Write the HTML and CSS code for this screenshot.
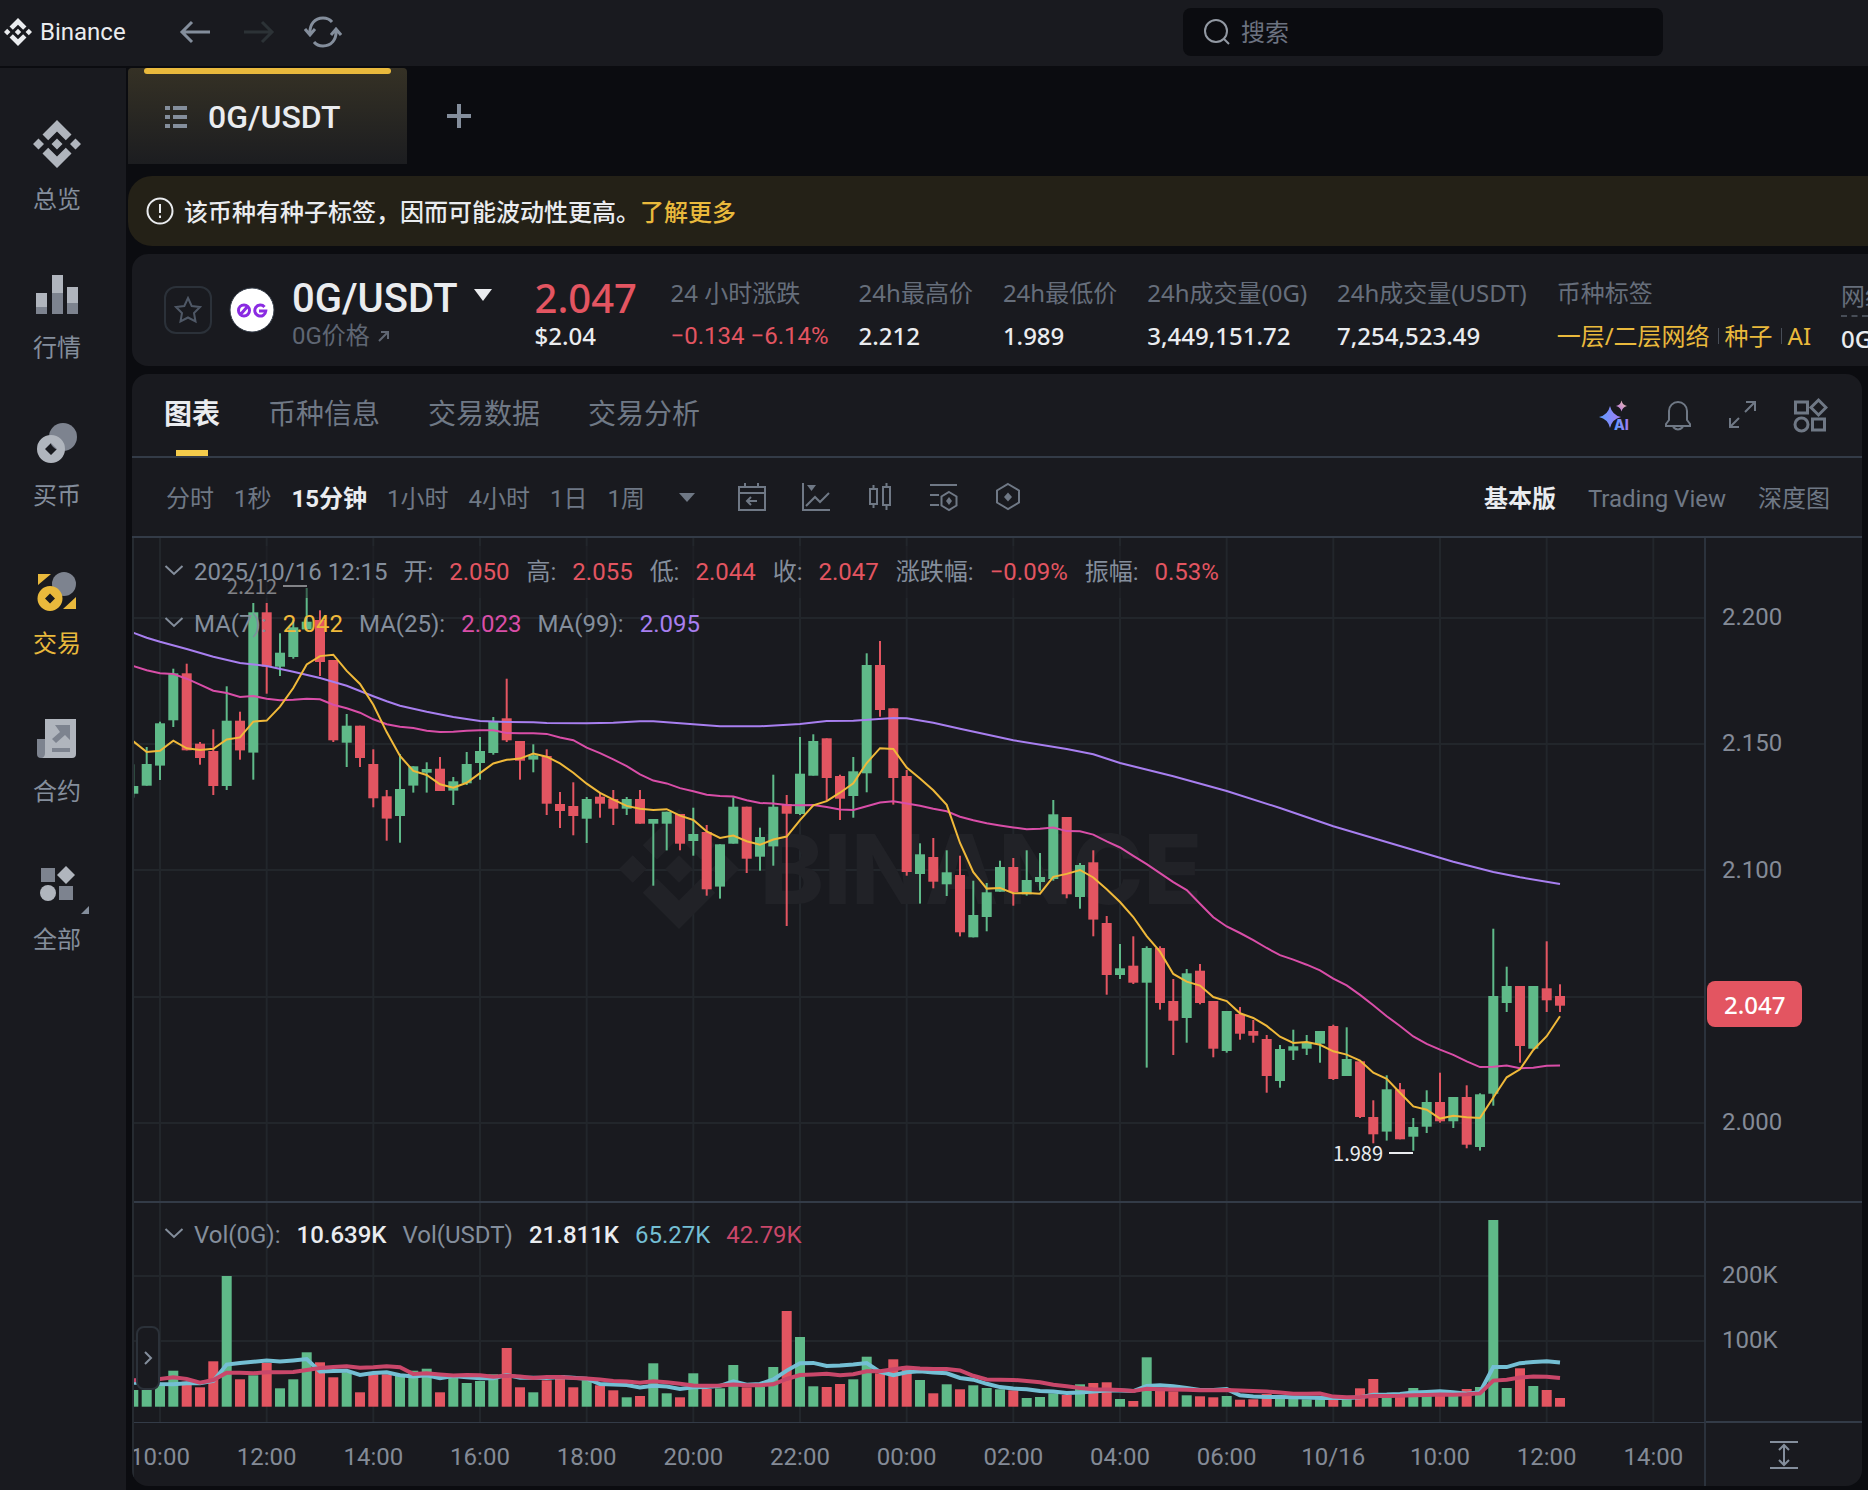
FILE: index.html
```html
<!DOCTYPE html>
<html lang="zh-CN">
<head>
<meta charset="utf-8">
<meta name="viewport" content="width=device-width, initial-scale=1">
<title>0G/USDT | Binance</title>
<link rel="stylesheet" href="styles.css">
</head>
<body>
<svg class="defs" aria-hidden="true">
  <symbol id="bnb" viewBox="0 0 48 48">
    <path d="M24 0 38.500 14.500 32.800 20.200 24 11.400 15.200 20.200 9.500 14.500zM5.500 18.500 11 24 5.500 29.500 0 24zM24 18.500 29.500 24 24 29.500 18.500 24zM42.500 18.500 48 24 42.500 29.500 37 24zM15.200 27.800 24 36.600 32.800 27.800 38.500 33.500 24 48 9.500 33.500z"/>
  </symbol>
  <symbol id="chevron" viewBox="0 0 20 12"><path d="M1.500 2 10 10 18.500 2" fill="none" stroke="currentColor" stroke-width="2"/></symbol>
</svg>

<header class="topbar">
  <a class="brand" href="#"><svg class="brand-logo"><use href="#bnb"/></svg>Binance</a>
  <nav class="history" aria-label="导航">
    <button class="icon-btn" aria-label="后退"><svg width="32" height="32" viewBox="0 0 32 32"><path d="M13 6 3 16l10 10M3 16h28"/></svg></button>
    <button class="icon-btn off" aria-label="前进"><svg width="32" height="32" viewBox="0 0 32 32"><path d="m19 6 10 10-10 10M29 16H1"/></svg></button>
    <button class="icon-btn wide" aria-label="刷新"><svg width="38" height="32" viewBox="0 0 38 32"><path d="M6 19C5 8 11 2 19 2c4 0 7 1.500 9 4M1 13l5 6 5-6M32 13c1 11-5 17-13 17-4 0-7-1.500-9-4M27 19l5-6 5 6"/></svg></button>
  </nav>
  <label class="search">
    <svg width="28" height="28" viewBox="0 0 28 28"><circle cx="13" cy="13" r="11"/><path d="m21 21 5 5"/></svg>
    <input type="search" placeholder="搜索" aria-label="搜索">
  </label>
</header>

<div class="shell">
  <nav class="sidebar" aria-label="主菜单">
    <a href="#"><svg class="c1" viewBox="0 0 48 48"><use href="#bnb"/></svg>总览</a>
    <a href="#"><svg viewBox="0 -3 48 48"><path class="c1" d="M3 22h11v14H3zM19 4h11v18H19zM34 16h11v16H34z"/><path class="c2" d="M3 36h11v7H3zM19 22h11v21H19zM34 32h11v11H34z"/></svg>行情</a>
    <a href="#"><svg viewBox="0 -6 48 48"><circle class="c2" cx="30" cy="15" r="14"/><path class="c1" fill-rule="evenodd" d="M18 13a14 14 0 1 0 0 28 14 14 0 0 0 0-28zm0 8 6 6-6 6-6-6z"/></svg>买币</a>
    <a class="active" href="#"><svg viewBox="0 -4 48 48"><circle class="c2" cx="31" cy="16" r="12"/><path class="cy" fill-rule="evenodd" d="M17 18a12.500 12.500 0 1 0 0 25 12.500 12.500 0 0 0 0-25zm0 7.500 5 5-5 5-5-5zM5 6h13L5 17zM43 29v12H30z"/></svg>交易</a>
    <a href="#"><svg viewBox="0 -4 48 48"><path class="c2" d="M4 23h9v19H8q-4 0-4-4z"/><path class="c1" d="M12 3h31v35q0 4-4 4H9q3-1 3-5z"/><path class="c2" d="M22 9h15v15l-5-5-9 8-4-4 8-7zM19 32h18v4H19z"/></svg>合约</a>
    <a class="more" href="#"><svg viewBox="0 0 48 48"><path class="c2" d="M8 8h14v14H8zM26 26h14v14H26z"/><path class="c1" d="m33 6 9 9-9 9-9-9z"/><circle class="c1" cx="15" cy="33" r="8"/></svg>全部<i class="corner"></i></a>
  </nav>

  <main class="content">
    <div class="pair-tabs">
      <button class="pair-tab"><svg width="22" height="24" viewBox="0 0 22 24"><path d="M0 3h5M8 3h14M0 12h5M8 12h14M0 21h5M8 21h14"/></svg>0G/USDT</button>
      <button class="add" aria-label="新标签"><svg width="24" height="24" viewBox="0 0 24 24"><path d="M12 0v24M0 12h24"/></svg></button>
    </div>

    <div class="notice">
      <svg width="28" height="28" viewBox="0 0 28 28"><circle cx="14" cy="14" r="12.500"/><path d="M14 7v9M14 18.500v2.500"/></svg>
      <p>该币种有种子标签，因而可能波动性更高。<a href="#">了解更多</a></p>
    </div>

    <section class="ticker">
      <button class="star" aria-label="收藏"><svg width="28" height="28" viewBox="0 0 28 28"><path d="m14 2 3.700 8 8.300 1-6 6 1.500 8.500L14 21.500 6.500 25.500 8 17l-6-6 8.300-1z"/></svg></button>
      <svg class="coin" width="46" height="46" viewBox="0 0 46 46"><circle cx="23" cy="23" r="22"/><path d="M15 18a5.500 5.500 0 1 0 0 11 5.500 5.500 0 0 0 0-11zM11.500 27.500l7-8M35.500 20a5.500 5.500 0 1 0 1.300 4H30"/></svg>
      <div class="pair">
        <h1><button>0G/USDT<i class="caret"></i></button></h1>
        <a href="#">0G价格<svg width="12" height="12" viewBox="0 0 12 12"><path d="M1 11 10 2M3 2h7v7"/></svg></a>
      </div>
      <div class="last"><strong>2.047</strong><span>$2.04</span></div>
      <dl class="stats">
        <div><dt>24 小时涨跌</dt><dd class="down">−0.134 −6.14%</dd></div>
        <div><dt>24h最高价</dt><dd>2.212</dd></div>
        <div><dt>24h最低价</dt><dd>1.989</dd></div>
        <div><dt>24h成交量(0G)</dt><dd>3,449,151.72</dd></div>
        <div><dt>24h成交量(USDT)</dt><dd>7,254,523.49</dd></div>
        <div><dt>币种标签</dt><dd class="tags"><a href="#">一层/二层网络</a><a href="#">种子</a><a href="#">AI</a></dd></div>
        <div class="network"><dt>网络</dt><dd>0G</dd></div>
      </dl>
    </section>

    <section class="card">
      <div class="card-head">
        <div class="tabs">
          <button class="on">图表</button><button>币种信息</button><button>交易数据</button><button>交易分析</button>
        </div>
        <div class="tools">
          <button aria-label="AI"><svg width="36" height="36" viewBox="0 0 36 36">
            <defs>
              <linearGradient id="ai" x1="0" y1="0" x2="1" y2="0"><stop offset="0" stop-color="#5c9dff"/><stop offset="1" stop-color="#a37bf5"/></linearGradient>
              <linearGradient id="spark" x1="0" y1="1" x2="1" y2="0"><stop offset="0" stop-color="#b06cf0"/><stop offset="1" stop-color="#f2c9a0"/></linearGradient>
            </defs>
            <path class="fill-ai" d="M16 9q2 9 11 11-9 2-11 11-2-9-11-11 9-2 11-11z"/><path class="fill-pk" d="M27.500 3.500q1 4.500 5.500 5.500-4.500 1-5.500 5.500-1-4.500-5.500-5.500 4.500-1 5.500-5.500z"/><text x="20" y="33">AI</text></svg></button>
          <button aria-label="提醒"><svg width="36" height="36" viewBox="0 0 36 36"><path d="M9 14a9 9 0 0 1 18 0v9l3 4v2H6v-2l3-4zM13 30q5 5 10 0"/></svg></button>
          <button aria-label="全屏"><svg width="36" height="36" viewBox="0 0 36 36"><path d="M19 15 29 5M20 5h9v9M13 21 4 30M4 21v9h9"/></svg></button>
          <button aria-label="布局"><svg width="36" height="36" viewBox="0 0 36 36"><path class="bold" d="M3.500 5h12v11h-12zM20.500 22h12v11h-12zM26.500 3l7.500 7.500-7.500 7.500-7.500-7.500z"/><circle class="bold" cx="9.500" cy="27.500" r="6.500"/></svg></button>
        </div>
      </div>

      <div class="toolbar">
        <div class="intervals">
          <button>分时</button><button>1秒</button><button class="on">15分钟</button><button>1小时</button><button>4小时</button><button>1日</button><button>1周</button>
        </div>
        <div class="indicators">
          <button class="expand" aria-label="更多周期"><i class="caret small"></i></button>
          <button aria-label="跳转日期"><svg width="32" height="32" viewBox="0 0 32 32"><path d="M3 6h26v23H3zM3 12h26M9 2v4M22 2v4M21 20H11M15 16l-4 4 4 4"/></svg></button>
          <button aria-label="指标"><svg width="32" height="32" viewBox="0 0 32 32"><path d="M3 2v27h27M6 25l9-9 5 5 9-9"/><path class="solid" d="M7 4h9l-4.500 6z"/></svg></button>
          <button aria-label="图表类型"><svg width="32" height="32" viewBox="0 0 32 32"><path d="M6 8h7v15H6zM9.500 4v4M9.500 23v4M19 6h7v18h-7zM22.500 2v4M22.500 24v5"/></svg></button>
          <button aria-label="指标设置"><svg width="32" height="32" viewBox="0 0 32 32"><path d="M2 4h27M2 14h9M2 24h9M21 11l7.500 4.500v9L21 29l-7.500-4.500v-9z"/><path class="solid" d="m21 16 3 4-3 4-3-4z"/></svg></button>
          <button aria-label="设置"><svg width="32" height="32" viewBox="0 0 32 32"><path d="m16 3 11 6.500v12L16 28 5 21.500v-12z"/><path class="solid" d="m16 11.500 4 4.500-4 4.500-4-4.500z"/></svg></button>
        </div>
        <div class="modes"><button class="on">基本版</button><button>Trading View</button><button>深度图</button></div>
      </div>

      <div class="chart">
        <div class="pane price-pane">
          <svg id="price" class="plot"></svg>
          <div class="legends">
            <div class="legend veil"><svg class="chev"><use href="#chevron"/></svg><span>2025/10/16 12:15</span><span>开:</span><span class="down">2.050</span><span>高:</span><span class="down">2.055</span><span>低:</span><span class="down">2.044</span><span>收:</span><span class="down">2.047</span><span>涨跌幅:</span><span class="down">−0.09%</span><span>振幅:</span><span class="down">0.53%</span></div>
            <div class="legend"><svg class="chev"><use href="#chevron"/></svg><span>MA(7):</span><span class="ma7">2.042</span><span>MA(25):</span><span class="ma25">2.023</span><span>MA(99):</span><span class="ma99">2.095</span></div>
          </div>
        </div>
        <div class="scale price-scale"><svg id="price-scale" class="plot"></svg><output class="price-tag">2.047</output></div>

        <div class="pane volume-pane">
          <svg id="volume" class="plot"></svg>
          <div class="legends">
            <div class="legend"><svg class="chev"><use href="#chevron"/></svg><span>Vol(0G):</span><span class="white">10.639K</span><span>Vol(USDT)</span><span class="white">21.811K</span><span class="v7">65.27K</span><span class="v14">42.79K</span></div>
          </div>
          <button class="handle" aria-label="展开工具"><svg width="10" height="16" viewBox="0 0 10 16"><path d="m2 2 6 6-6 6"/></svg></button>
        </div>
        <div class="scale volume-scale"><svg id="volume-scale" class="plot"></svg></div>

        <div class="pane time-pane"><svg id="time" class="plot"></svg></div>
        <div class="scale corner-cell"><button aria-label="自动缩放"><svg width="32" height="32" viewBox="0 0 32 32"><path d="M2 3h28M2 29h28M16 7v18M11 11l5-5 5 5M11 21l5 5 5-5"/></svg></button></div>
      </div>
    </section>
  </main>
</div>
<script src="chart.js"></script>
</body>
</html>
```
FILE: styles.css
```css
:root {
  --bg: #0b0c10;
  --panel: #191a1f;
  --line: #333b47;
  --text: #eaecef;
  --muted: #6f7885;
  --soft: #848e9c;
  --up: #5fba89;
  --down: #e35561;
  --gold: #e9b93c;
  --ui: Roboto, "Noto Sans CJK SC", sans-serif;
  --figures: "Noto Sans", "Noto Sans CJK SC", sans-serif;
}
* { box-sizing: border-box; }
body {
  margin: 0;
  background: var(--bg);
  color: var(--text);
  font: 24px/32px var(--ui);
  overflow-x: hidden;
}
button, input { font: inherit; color: inherit; background: none; border: 0; padding: 0; margin: 0; }
a { color: inherit; text-decoration: none; }
p, h1, dl, dd { margin: 0; }
svg { display: block; flex: none; fill: none; stroke: currentColor; stroke-width: 2; }
.defs { position: absolute; width: 0; height: 0; }
.solid { fill: currentColor; stroke: none; }
.on { color: var(--text); font-weight: 700; }
.down { color: var(--down); }

/* window bar */
.topbar { display: flex; align-items: center; height: 66px; padding-bottom: 2px; background: var(--panel); }
.brand { display: flex; align-items: center; gap: 8px; padding-left: 4px; }
.brand-logo { width: 28px; height: 28px; fill: currentColor; stroke: none; }
.history { display: flex; align-items: center; gap: 32px; margin-left: 53px; color: #848e9c; }
.history svg { stroke-width: 3; }
.history .off { color: #2c3236; }
.history .wide { margin-left: -3px; }
.search {
  display: flex; align-items: center; gap: 10px;
  width: 480px; height: 48px; margin: 0 205px 0 auto; padding: 0 20px;
  border-radius: 8px; background: var(--bg); color: #9299a3;
}
.search input { flex: 1; min-width: 0; padding-top: 2px; outline: 0; }
.search input::placeholder { color: #6b7280; opacity: 1; }

.shell { display: flex; gap: 2px; padding-top: 2px; }

/* side menu */
.sidebar { display: flex; flex-direction: column; gap: 40px; flex: none; width: 126px; padding-top: 52px; background: var(--panel); color: var(--soft); }
.sidebar a { display: flex; flex-direction: column; align-items: center; gap: 14px; height: 108px; padding-right: 12px; line-height: 36px; }
.sidebar svg { width: 48px; height: 48px; stroke: none; }
.sidebar .active { color: var(--gold); }
.sidebar .more { position: relative; }
.corner { position: absolute; right: 37px; top: 46px; border: 4px solid; border-color: transparent var(--soft) var(--soft) transparent; }
.c1 { fill: #b0b5bd; }
.c2 { fill: #7d838f; }
.cy { fill: var(--gold); }

.content { flex: 1; min-width: 0; display: flex; flex-direction: column; padding-bottom: 4px; }

/* open pairs */
.pair-tabs { display: flex; height: 96px; }
.pair-tab {
  position: relative; display: flex; align-items: center; gap: 21px;
  width: 279px; padding: 2px 0 0 37px; border-radius: 4px 4px 0 0;
  background: linear-gradient(#353125, #1c1d20); font-size: 32px; font-weight: 500;
}
.pair-tab svg { color: var(--soft); stroke-width: 4; }
.pair-tab::before { content: ""; position: absolute; inset: 0 16px auto; height: 6px; border-radius: 3px; background: var(--gold); }
.add { padding: 0 40px; color: var(--soft); }
.add svg { stroke-width: 4; }

.notice {
  display: flex; align-items: center; gap: 10px; height: 70px; margin-top: 12px; padding-left: 18px;
  border-radius: 24px 0 0 24px; background: #242117; font-weight: 500; white-space: nowrap;
}
.notice p { padding-top: 4px; }
.notice a { color: var(--gold); }

/* ticker strip */
.ticker {
  display: flex; align-items: flex-start; height: 112px; margin: 8px 0 0 4px; padding: 22px 0 0 32px;
  border-radius: 16px 0 0 16px; background: var(--panel); overflow: hidden; white-space: nowrap;
}
.ticker > * { flex: none; }
.star { display: grid; place-items: center; width: 48px; height: 48px; margin-top: 10px; border: 2px solid #2b3139; border-radius: 12px; color: #4f5866; }
.coin { margin: 11px 17px 0; color: #8a2be2; stroke-width: 3; }
.coin circle { fill: #fff; stroke: #333b47; stroke-width: 1; }
.pair h1, .last strong { display: block; height: 44px; padding-top: 3px; font-size: 40px; line-height: 40px; font-weight: 500; }
.pair h1 button { display: flex; align-items: center; line-height: 40px; }
.caret { width: 0; height: 0; margin: -8px 0 0 16px; border: 9px solid transparent; border-top: 12px solid currentColor; border-bottom: 0; }
.caret.small { display: block; margin: 0; border-width: 9px 8px 0; }
.pair a { display: flex; align-items: center; gap: 8px; color: #5f6673; }
.last { width: 136px; margin-left: 43px; font-family: var(--figures); }
.last strong { padding-top: 2px; color: var(--down); font-weight: 500; }
.last span { display: block; font-weight: 500; }
.stats { display: flex; gap: 30px; font-family: var(--figures); }
.stats > div { flex: none; }
.stats dt { height: 38px; padding-top: 1px; color: #666e7b; }
.stats dd { margin-top: 6px; font-weight: 500; }
.stats .down { font-family: var(--ui); font-weight: 400; }
.tags { display: flex; color: var(--gold); }
.stats .tags { font-weight: 400; }
.tags a + a { margin-left: 8px; padding-left: 7px; background: linear-gradient(#474d57, #474d57) 0 50% / 1px 16px no-repeat; }
.stats .network dt { height: 41px; padding-top: 4px; border-bottom: 2px dashed #474d57; }

/* chart card */
.card { margin: 8px 6px 0 4px; border-radius: 16px; background: var(--panel); overflow: hidden; }
.card-head, .toolbar { display: flex; align-items: center; justify-content: space-between; border-bottom: 2px solid var(--line); color: var(--muted); white-space: nowrap; }
.card-head { height: 84px; padding: 0 32px; }
.tabs { display: flex; gap: 48px; height: 82px; font-size: 28px; }
.tabs .on { position: relative; }
.tabs .on::after { content: ""; position: absolute; left: 12px; right: 12px; bottom: 0; height: 6px; background: #f5cc4b; }
.tools { display: flex; gap: 30px; margin-right: 2px; }
.tools .bold { stroke-width: 3; }
.tools text { font: 800 14px Inter, sans-serif; fill: url(#ai); stroke: none; }
.fill-ai { fill: url(#ai); stroke: none; }
.fill-pk { fill: url(#spark); stroke: none; }
.toolbar { height: 80px; padding: 0 32px; }
.intervals { display: flex; gap: 20px; padding: 4px 0 0 2px; }
.indicators { display: flex; align-items: center; gap: 32px; margin: 0 auto 0 34px; }
.expand { margin-right: 9px; }
.modes { display: flex; gap: 32px; padding-top: 4px; }

.chart { display: grid; grid-template-columns: minmax(0, 1fr) 156px; border-left: 2px solid #262b31; }
.pane { position: relative; border-right: 2px solid #2b323c; overflow: hidden; }
.scale { position: relative; }
.plot { width: 100%; height: 100%; stroke: none; }
.price-pane, .price-scale { height: 665px; border-bottom: 2px solid var(--line); }
.volume-pane { height: 220px; border-bottom: 1px solid var(--line); }
.volume-scale { height: 220px; border-bottom: 2px solid var(--line); }
.time-pane, .corner-cell { height: 63px; }
.corner-cell { display: grid; place-items: center; color: var(--soft); }
.legends { position: absolute; top: 8px; left: 30px; right: 0; color: var(--soft); }
.volume-pane .legends { top: 4px; }
.legend { display: flex; align-items: center; gap: 16px; width: max-content; height: 52px; white-space: nowrap; }
.volume-pane .legend { height: 56px; }
.veil { background: rgb(25 26 31 / 50%); }
.chev { width: 20px; height: 12px; margin: -4px -6px 0 0; }
.legend .down { padding-right: 1px; }
.white { color: var(--text); font-weight: 500; }
.ma7 { color: #f0b93a; }
.ma25 { color: #d94ea8; }
.ma99 { color: #a87ff0; }
.v7 { color: #74bfd4; }
.v14 { color: #c9476a; }
.price-tag { position: absolute; top: 443px; left: 1px; padding: 8px 17px 6px; border-radius: 8px; background: var(--down); color: #fff; font-family: var(--figures); font-weight: 500; }
.handle { position: absolute; left: 2px; top: 123px; display: grid; place-items: center; width: 24px; height: 64px; border: 2px solid #2b3139; border-radius: 8px; background: var(--panel); color: var(--soft); }

/* plotted shapes */
.grid { stroke: #22262b; stroke-width: 2; }
.up { fill: var(--up); }
.fall { fill: var(--down); }
.trend { fill: none; stroke-width: 2; stroke: currentColor; }
.trend.thick { stroke-width: 4; }
.mark, .mark svg { fill: #212227; stroke: none; }
.mark text { font: 800 96px Inter, sans-serif; }
.plot .tick { fill: #848b97; }
.plot .note { fill: var(--text); font: 20px "Noto Sans CJK SC", sans-serif; }
.note-line { stroke: var(--text); stroke-width: 2; }
```
FILE: chart.js
```js
const STEP = 40 / 3;
const ORIGIN = 26;
const FIRST = -2;
const x = i => ORIGIN + i * STEP;
const r = n => Math.round(n * 10) / 10;

// Each bar: direction, high, body top, body bottom, low, in thirds of a pixel above the session base.
const sessions = [
  [0, 'G703,768,791,803 G651,702,767,767 G575,580,707,750 G416,430,571,591 R401,430,661,661 R636,641,684,704 R598,663,768,795 G469,572,768,780 R545,572,661,689 G219,247,668,749 R219,247,410,491 G310,368,410,438 G270,292,381,386 G174,275,298,298 R241,270,396,438 R390,390,631,636 G552,587,638,711 R587,587,684,711 R658,702,805,832 R780,799,866,932 G672,777,858,938 G709,709,767,788 G697,717,728,788 R681,716,783,783 G741,754,782,825 G666,702,760,765 G621,663,699,749 G561,575,669,674 R446,565,631,636 R633,633,692,749 G643,676,689,727'],
  [210, 'R448,468,611,645 R576,612,633,684 R547,618,648,706 G591,597,656,729 R578,590,611,653 R570,597,626,675 G591,597,626,645 R570,597,671,671 G657,657,671,857 G635,635,671,751 R642,642,731,751 G623,702,723,767 R675,696,868,887 G733,733,860,896 G592,620,731,731 R620,620,776,819 G683,711,770,812 G524,620,739,797 R585,612,641,978 G411,521,642,645 G403,423,527,527 R415,415,534,602 R524,528,596,660 G471,514,588,653 G160,195,520,577 R123,195,330,350 R325,325,534,614 R510,528,816,827 G730,763,822,911'],
  [690, 'R234,291,365,385 G271,337,373,408 R287,345,517,529 G362,465,532,532 G369,397,471,514 G302,321,395,395 R294,321,396,437 G271,360,403,407 G279,351,366,392 G120,163,357,362 R171,171,403,415 G309,315,411,446 R271,307,479,529 R468,489,645,704 G552,625,645,657 R529,617,668,672 G559,564,668,923 R559,564,729,749 R657,723,782,885 G627,640,774,848 R612,632,729,733 R723,723,866,892 G753,753,873,878 R741,762,821,839 R780,813,827,848 R825,837,948,998 G855,867,963,983 G809,859,872,900'],
  [1050, 'G465,486,506,525 G453,453,491,548 R434,438,597,600 G442,537,588,588 R544,544,711,714 R661,711,763,790 G586,628,755,782 R609,628,778,778 G714,741,770,812 G631,666,740,759 R578,666,724,728 G651,651,724,744 R616,651,794,805 G640,643,801,812 G146,348,641,677 G260,318,369,396 R318,318,498,548 G318,318,506,506 R184,325,361,396 R313,348,377,396']
];
const bars = sessions.flatMap(([base, rows]) => rows.split(' ').map(s => {
  const [high, top, bottom, low] = s.slice(1).split(',').map(n => (+n + base) / 3 - 8);
  return { up: s[0] === 'G', high, top, bottom, low };
}));
const volumes = [570,570,555,512,545,562,484,228,538,526,489,565,538,457,487,532,517,577,523,523,523,512,506,577,534,549,543,523,444,562,577,541,525,562,541,556,571,592,588,490,580,592,520,567,565,
  495,562,560,501,333,411,559,561,552,538,470,520,478,498,540,580,553,568,556,564,568,571,594,591,580,585,553,549,547,597,603,472,571,574,586,589,592,588,599,598,582,590,594,
  598,598,598,598,565,537,590,588,564,587,585,586,567,561,60,564,505,558,570,594].map(n => n / 3 - 3);

function average(values, size, seed) {
  return values.map((_, i) => i < seed.length ? seed[i]
    : values.slice(i - size + 1, i + 1).reduce((a, b) => a + b, 0) / size);
}
const closes = bars.map(b => b.up ? b.top : b.bottom);
const price = n => n / 3 - 8;
const vol = n => n / 3 - 3;
const ma7 = average(closes, 7, [634, 666, 662, 632, 655, 660].map(price));
const ma25 = average(closes, 25, [408, 421, 430, 432, 446, 464, 482, 489, 501, 498, 506, 511, 509, 506, 508, 524, 535, 548, 568, 583, 590, 594, 602, 606].map(price));
const vma7 = average(volumes, 7, [548, 550, 552, 553, 550, 550].map(vol));
const vma14 = average(volumes, 14, [541, 539, 537, 532, 537, 548, 540, 518, 518, 520, 517, 517, 516].map(vol));
const slow = [[-2,308],[-1,323],[0,335],[2,357],[4,380],[6,399],[8,408],[10,425],[12,444],[14,467],[16,499],[17,514],[18,527],[20,545],[22,561],[24,573],[26,576],[28,577],[29,579],[32,580],[34,578],[36,574],[37,574],[39,580],[41,586],[42,589],[45,589],[48,582],[50,573],[52,572],[55,564],[56,565],[58,578],[60,596],[64,631],[68,657],[70,673],[72,699],[76,739],[80,783],[84,834],[88,889],[93,948],[97,995],[100,1026],[102,1042],[105,1062]];

const points = list => list.map((y, i) => r(x(i + FIRST)) + ',' + r(y)).join(' ');
const line = (pts, cls) => `<polyline class="trend ${cls}" points="${pts}"/>`;
const rect = (cx, w, y, h, cls) => `<rect class="${cls}" x="${r(cx - w / 2)}" y="${r(y)}" width="${w}" height="${r(Math.max(h, 1))}"/>`;
const row = y => `<line class="grid" x1="0" x2="100%" y1="${y}" y2="${y}"/>`;
const hours = ['10:00','12:00','14:00','16:00','18:00','20:00','22:00','00:00','02:00','04:00','06:00','10/16','10:00','12:00','14:00'];
const columns = hours.map((_, k) => `<line class="grid" x1="${r(x(k * 8))}" x2="${r(x(k * 8))}" y1="0" y2="100%"/>`).join('');
const draw = (id, html) => { document.getElementById(id).innerHTML = html; };

draw('price',
  columns + [80, 206, 332, 459, 585].map(row).join('') +
  '<g class="mark"><svg x="485" y="271" width="120" height="120"><use href="#bnb"/></svg><text x="626" y="366">BINANCE</text></g>' +
  bars.map((b, i) => {
    const cls = b.up ? 'up' : 'fall', cx = x(i + FIRST);
    return rect(cx, 2, b.high, b.low - b.high, cls) + rect(cx, 10, b.top, b.bottom - b.top, cls);
  }).join('') +
  line(slow.map(([i, y]) => r(x(i)) + ',' + r(price(y))).join(' '), 'ma99') +
  line(points(ma25), 'ma25') + line(points(ma7), 'ma7') +
  '<line class="note-line" x1="149" x2="173" y1="48" y2="48"/><text class="note" x="143" y="56" text-anchor="end">2.212</text>' +
  '<line class="note-line" x1="1255" x2="1279" y1="615" y2="615"/><text class="note" x="1249" y="623" text-anchor="end">1.989</text>');

draw('volume',
  columns + row(73) + row(138) +
  volumes.map((y, i) => rect(x(i + FIRST), 10, y, 203.7 - y, bars[i].up ? 'up' : 'fall')).join('') +
  line(points(vma7), 'v7 thick') + line(points(vma14), 'v14 thick'));

const label = (cx, y, text, anchor) => `<text class="tick" x="${r(cx)}" y="${y}" text-anchor="${anchor}">${text}</text>`;
draw('time', hours.map((t, k) => label(x(k * 8), 42, t, 'middle')).join(''));
draw('price-scale', [['2.200', 87], ['2.150', 213], ['2.100', 340], ['2.000', 592]].map(([t, y]) => label(16, y, t, 'start')).join(''));
draw('volume-scale', [['200K', 80], ['100K', 145]].map(([t, y]) => label(16, y, t, 'start')).join(''));
```
